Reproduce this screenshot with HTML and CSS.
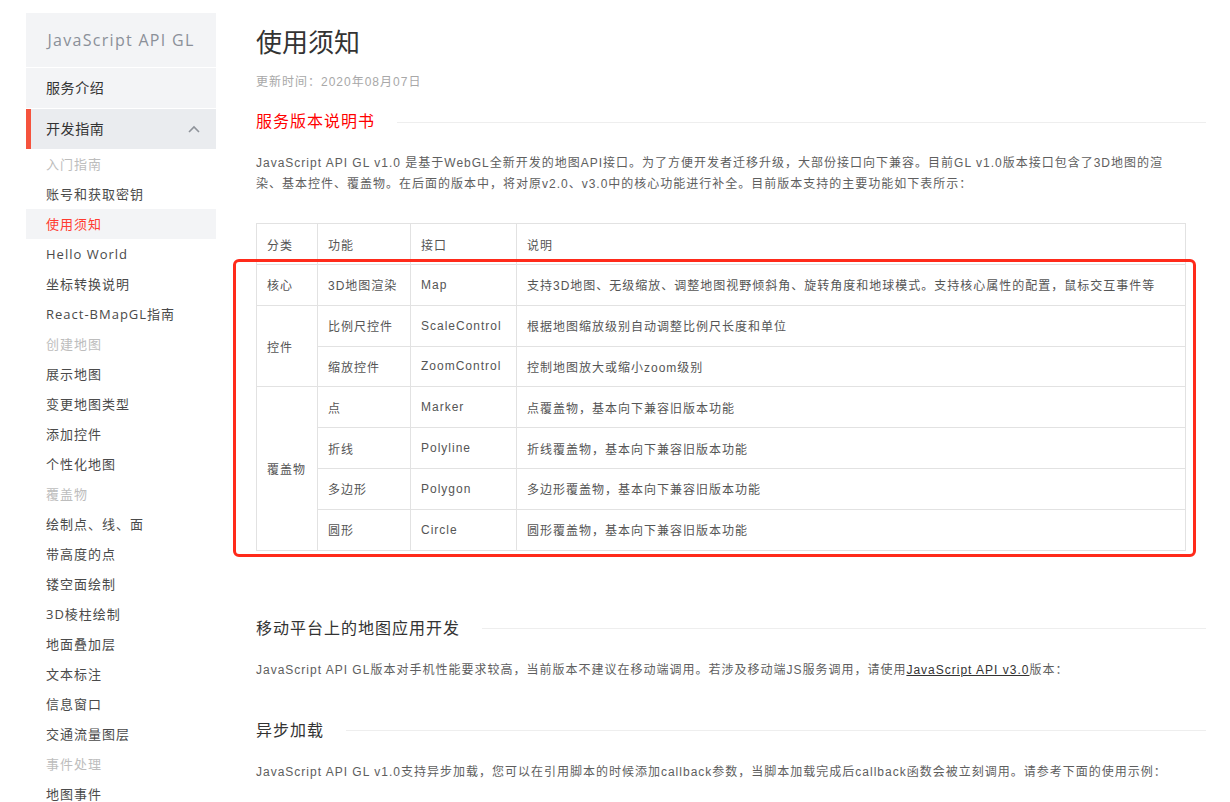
FILE: index.html
```html
<!DOCTYPE html>
<html lang="zh">
<head>
<meta charset="utf-8">
<title>使用须知 - JavaScript API GL</title>
<link rel="stylesheet" href="styles.css">
</head>
<body>
<div class="page">
  <aside class="sidebar">
    <div class="side-title">JavaScript API GL</div>
    <div class="side-top">服务介绍</div>
    <div class="side-top open">
      <span>开发指南</span>
      <svg class="chev" width="12" height="8" viewBox="0 0 12 8"><polyline points="1,7 6,2 11,7" fill="none" stroke="#8f939a" stroke-width="1.6"/></svg>
    </div>
    <ul class="side-list">
      <li class="grp">入门指南</li>
      <li>账号和获取密钥</li>
      <li class="active">使用须知</li>
      <li>Hello World</li>
      <li>坐标转换说明</li>
      <li>React-BMapGL指南</li>
      <li class="grp">创建地图</li>
      <li>展示地图</li>
      <li>变更地图类型</li>
      <li>添加控件</li>
      <li>个性化地图</li>
      <li class="grp">覆盖物</li>
      <li>绘制点、线、面</li>
      <li>带高度的点</li>
      <li>镂空面绘制</li>
      <li>3D棱柱绘制</li>
      <li>地面叠加层</li>
      <li>文本标注</li>
      <li>信息窗口</li>
      <li>交通流量图层</li>
      <li class="grp">事件处理</li>
      <li>地图事件</li>
    </ul>
  </aside>

  <main class="main">
    <h1 class="title">使用须知</h1>
    <div class="date">更新时间：2020年08月07日</div>

    <h2 class="sec red">服务版本说明书</h2>
    <p class="txt">JavaScript API GL v1.0 是基于WebGL全新开发的地图API接口。为了方便开发者迁移升级，大部份接口向下兼容。目前GL v1.0版本接口包含了3D地图的渲<br>染、基本控件、覆盖物。在后面的版本中，将对原v2.0、v3.0中的核心功能进行补全。目前版本支持的主要功能如下表所示：</p>

    <div class="table-wrap">
      <table class="tbl">
        <colgroup>
          <col class="c1"><col class="c2"><col class="c3"><col class="c4">
        </colgroup>
        <thead>
          <tr><th>分类</th><th>功能</th><th>接口</th><th>说明</th></tr>
        </thead>
        <tbody>
          <tr><td>核心</td><td>3D地图渲染</td><td>Map</td><td>支持3D地图、无级缩放、调整地图视野倾斜角、旋转角度和地球模式。支持核心属性的配置，鼠标交互事件等</td></tr>
          <tr><td rowspan="2">控件</td><td>比例尺控件</td><td>ScaleControl</td><td>根据地图缩放级别自动调整比例尺长度和单位</td></tr>
          <tr><td>缩放控件</td><td>ZoomControl</td><td>控制地图放大或缩小zoom级别</td></tr>
          <tr><td rowspan="4">覆盖物</td><td>点</td><td>Marker</td><td>点覆盖物，基本向下兼容旧版本功能</td></tr>
          <tr><td>折线</td><td>Polyline</td><td>折线覆盖物，基本向下兼容旧版本功能</td></tr>
          <tr><td>多边形</td><td>Polygon</td><td>多边形覆盖物，基本向下兼容旧版本功能</td></tr>
          <tr><td>圆形</td><td>Circle</td><td>圆形覆盖物，基本向下兼容旧版本功能</td></tr>
        </tbody>
      </table>
      <div class="mark"></div>
    </div>

    <h2 class="sec sec2">移动平台上的地图应用开发</h2>
    <p class="txt">JavaScript API GL版本对手机性能要求较高，当前版本不建议在移动端调用。若涉及移动端JS服务调用，请使用<a class="lnk" href="#">JavaScript API v3.0</a>版本：</p>

    <h2 class="sec sec3">异步加载</h2>
    <p class="txt">JavaScript API GL v1.0支持异步加载，您可以在引用脚本的时候添加callback参数，当脚本加载完成后callback函数会被立刻调用。请参考下面的使用示例：</p>
  </main>
</div>
</body>
</html>
```

FILE: styles.css
```css
* { box-sizing: border-box; }

html, body {
  margin: 0;
  padding: 0;
  background: #fff;
}

body {
  font-family: "Liberation Sans", "Noto Sans CJK SC", sans-serif;
  color: #333;
}

.page {
  display: flex;
  align-items: flex-start;
}

/* Sidebar */
.sidebar {
  width: 190px;
  margin-left: 26px;
  margin-top: 13px;
  flex-shrink: 0;
  font-family: "Open Sans", "Noto Sans CJK SC", sans-serif;
}

.side-title {
  height: 54px;
  line-height: 54px;
  text-align: center;
  background: #f3f4f6;
  color: #8b9099;
  font-size: 16px;
  letter-spacing: 1.3px;
}

.side-top {
  height: 41px;
  line-height: 40px;
  border-top: 1px solid #fff;
  background: #f3f4f6;
  padding-left: 20px;
  padding-right: 16px;
  font-size: 14px;
  letter-spacing: 0.6px;
  color: #333;
  display: flex;
  align-items: center;
  justify-content: space-between;
}

.side-top.open {
  background: #eaecef;
  box-shadow: inset 5px 0 0 #f5533d;
}

.chev { display: block; }

.side-list {
  list-style: none;
  margin: 0;
  padding: 0;
}

.side-list li {
  height: 30px;
  line-height: 30px;
  padding-left: 20px;
  font-size: 13px;
  letter-spacing: 1px;
  color: #4a4a4a;
}

.side-list li.grp { color: #bdbdbd; }

.side-list li.active {
  color: #ff3b30;
  background: #f3f4f6;
}

/* Main */
.main {
  width: 950px;
  margin-left: 40px;
  padding-top: 20px;
}

.title {
  margin: 0;
  font-size: 26px;
  line-height: 46px;
  font-weight: normal;
  color: #333;
}

.date {
  margin-top: 6px;
  font-size: 12px;
  line-height: 20px;
  letter-spacing: 1px;
  color: #a8a8a8;
}

.sec {
  display: flex;
  align-items: center;
  margin: 18px 0 0;
  font-size: 16px;
  line-height: 24px;
  font-weight: normal;
  letter-spacing: 1px;
  color: #333;
}

.sec::after {
  content: "";
  flex: 1;
  margin-left: 22px;
  border-top: 1px solid #eeeeee;
}

.sec.red { color: #ff0000; }

.sec2 { margin-top: 66px; }
.sec3 { margin-top: 38px; }

.txt {
  margin: 19px 0 0;
  font-size: 12px;
  line-height: 21px;
  letter-spacing: 1px;
  color: #5e5e5e;
}

.lnk {
  color: #333;
  text-decoration: underline;
}

/* Table */
.table-wrap {
  position: relative;
  margin-top: 28px;
  width: 930px;
}

.tbl {
  width: 930px;
  border-collapse: collapse;
  font-size: 12px;
  letter-spacing: 1px;
  color: #555;
}

.c1 { width: 61px; }
.c2 { width: 93px; }
.c3 { width: 106px; }
.c4 { width: auto; }

.tbl th,
.tbl td {
  border: 1px solid #e2e2e2;
  height: 41px;
  padding: 0 10px;
  text-align: left;
  font-weight: normal;
  vertical-align: middle;
  white-space: nowrap;
}

.tbl td { height: 40.8px; }

.mark {
  position: absolute;
  left: -23px;
  top: 36px;
  width: 963px;
  height: 298px;
  border: 3px solid #ff2a1a;
  border-radius: 6px;
  pointer-events: none;
}
```
